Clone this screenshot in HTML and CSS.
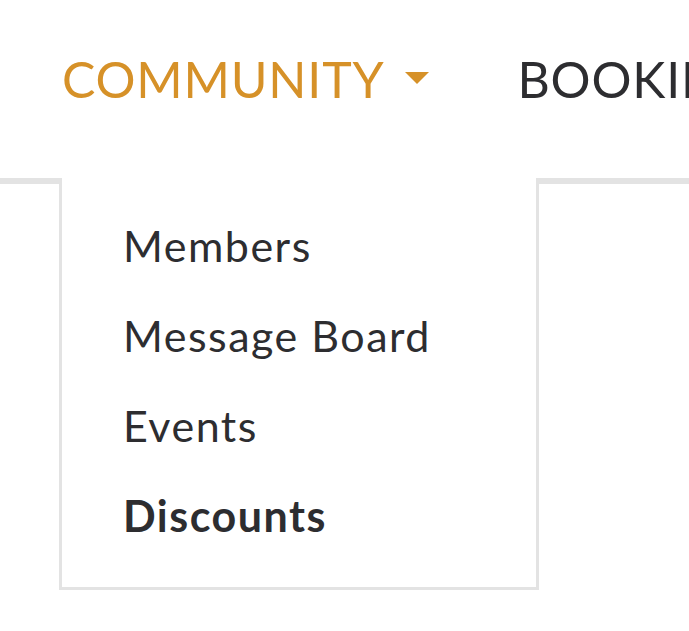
FILE: index.html
```html
<!DOCTYPE html>
<html>
<head>
  <title>Community</title>
  <link rel="stylesheet" href="styles.css">
</head>
<body>
  <nav class="main-nav">
    <div class="nav-item nav-item-open">
      <span class="nav-link nav-link-active">Community</span>
      <span class="nav-caret"></span>

      <ul class="dropdown">
        <li class="dropdown-item">Members</li>
        <li class="dropdown-item">Message Board</li>
        <li class="dropdown-item">Events</li>
        <li class="dropdown-item dropdown-item-current">Discounts</li>
      </ul>
    </div>

    <div class="nav-item">
      <span class="nav-link">Bookings</span>
    </div>
  </nav>
</body>
</html>
```

FILE: styles.css
```css
:root {
  --color-accent: #d69128;
  --color-text: #2d2d30;
  --color-border: #e3e3e3;
  --color-background: #ffffff;

  --font-family: Lato, "Open Sans", Arial, sans-serif;
}

html {
  overflow: hidden;
}

body {
  margin: 0;
  min-height: 631px;
  font-family: var(--font-family);
  color: var(--color-text);
  background-color: var(--color-background);
}

/* Top navigation */
.main-nav {
  display: flex;
  gap: 88px;
  height: 178px;
  padding-left: 62px;
  border-bottom: 6px solid var(--color-border);
  white-space: nowrap;
}

.nav-item {
  position: relative;
  display: flex;
  align-items: flex-start;
  padding-top: 54px;
}

.nav-link {
  font-size: 50px;
  line-height: 50px;
  letter-spacing: 0.8px;
  text-transform: uppercase;
  cursor: pointer;
}

.nav-link-active {
  color: var(--color-accent);
}

.nav-caret {
  width: 0;
  height: 0;
  margin-top: 18px;
  margin-left: 21px;
  border-left: 12px solid transparent;
  border-right: 12px solid transparent;
  border-top: 12px solid var(--color-accent);
}

/* Dropdown menu */
.dropdown {
  position: absolute;
  top: 178px;
  left: -3px;
  width: 413px;
  margin: 0;
  padding: 23px 0 26px 61px;
  list-style: none;
  background-color: var(--color-background);
  border: 3px solid var(--color-border);
  border-top: none;
  z-index: 10;
}

.dropdown-item {
  font-size: 43px;
  line-height: 90px;
  letter-spacing: 1.5px;
  cursor: pointer;
}

.dropdown-item-current {
  font-weight: 700;
}
```
